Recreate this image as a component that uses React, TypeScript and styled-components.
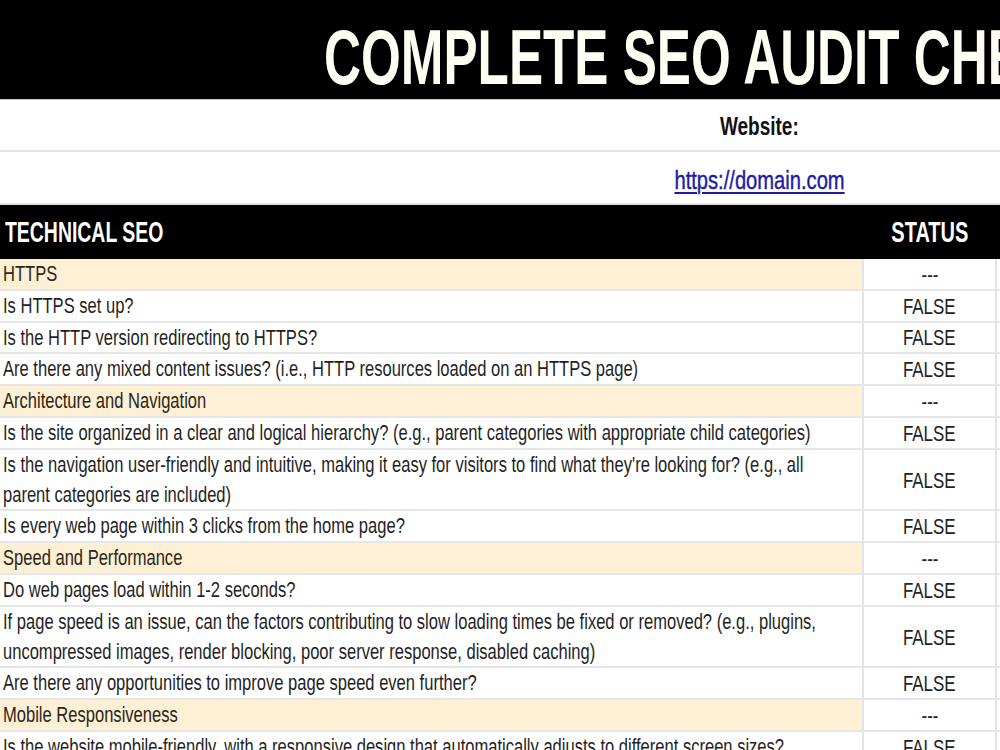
import styled, {createGlobalStyle} from "styled-components";

const GlobalStyle = createGlobalStyle`
  html, body {
    margin: 0;
    padding: 0;
    background: #fff;
    overflow: hidden;
  }
  body {
    font-family: "Liberation Sans", Arial, sans-serif;
    color: #1f1f1f;
  }
`;

type Item = { text: string, section?: boolean };

const items: Item[] = [
  {text: "HTTPS", section: true},
  {text: "Is HTTPS set up?"},
  {text: "Is the HTTP version redirecting to HTTPS?"},
  {text: "Are there any mixed content issues? (i.e., HTTP resources loaded on an HTTPS page)"},
  {text: "Architecture and Navigation", section: true},
  {text: "Is the site organized in a clear and logical hierarchy? (e.g., parent categories with appropriate child categories)"},
  {text: "Is the navigation user-friendly and intuitive, making it easy for visitors to find what they're looking for? (e.g., all parent categories are included)"},
  {text: "Is every web page within 3 clicks from the home page?"},
  {text: "Speed and Performance", section: true},
  {text: "Do web pages load within 1-2 seconds?"},
  {text: "If page speed is an issue, can the factors contributing to slow loading times be fixed or removed? (e.g., plugins, uncompressed images, render blocking, poor server response, disabled caching)"},
  {text: "Are there any opportunities to improve page speed even further?"},
  {text: "Mobile Responsiveness", section: true},
  {text: "Is the website mobile-friendly, with a responsive design that automatically adjusts to different screen sizes?"},
];

// the sheet uses a narrow face; squeeze Liberation Sans horizontally to match
const Narrow = styled.span<{ $scale: number, $origin?: string, $width?: number }>`
  display: inline-block;
  transform: scaleX(${p => p.$scale});
  transform-origin: ${p => p.$origin ?? "left"} center;
  ${p => p.$width ? `width: ${p.$width}px;` : "white-space: nowrap;"}
`;

const Sheet = styled.div`
  width: 1000px;
  height: 750px;
  overflow: hidden;
`;

const TitleBar = styled.div`
  height: 100px;
  background: #000;
  display: flex;
  align-items: center;
  padding: 15px 0 0 324px;
  white-space: nowrap;
  border-bottom: 1px solid #c9c9c9;
  box-sizing: border-box;
  overflow: hidden;
`;

const Title = styled.h1`
  margin: 0;
  color: #fffdf4;
  font-size: 77px;
  font-weight: 700;
  line-height: 1;
`;

const InfoRow = styled.div<{ $h: number }>`
  height: ${p => p.$h}px;
  display: grid;
  grid-template-columns: 862px 138px;
  border-bottom: 2px solid #e4e4e4;
  box-sizing: border-box;
`;

const InfoCell = styled.div<{ $right: number, $top: number }>`
  display: flex;
  align-items: center;
  justify-content: flex-end;
  padding-right: ${p => p.$right}px;
  padding-top: ${p => p.$top}px;
`;

const Label = styled.span`
  font-size: 25px;
  font-weight: 700;
  color: #111;
`;

const Link = styled.a`
  font-size: 26px;
  color: #1c1ca6;
  text-decoration: underline;
  text-decoration-thickness: 2px;
  text-underline-offset: 3px;
  -webkit-text-stroke: 0.4px #1c1ca6;
`;

const Table = styled.div`
  display: grid;
  grid-template-columns: 862px 135px 1fr;
`;

const HeadCell = styled.div<{ $center?: boolean }>`
  height: 54px;
  background: #000;
  color: #fff;
  font-size: 29px;
  font-weight: 700;
  display: flex;
  align-items: center;
  justify-content: ${p => p.$center ? "center" : "flex-start"};
  padding-left: ${p => p.$center ? 0 : 5}px;
  box-sizing: border-box;
  overflow: hidden;
`;

const TaskCell = styled.div<{ $section?: boolean }>`
  min-width: 0;
  overflow: hidden;
  box-sizing: border-box;
  padding: 0 0 0 3px;
  font-size: 22px;
  line-height: 29.8px;
  background: ${p => p.$section ? "#fdf0d4" : "#fff"};
  color: ${p => p.$section ? "#2b2619" : "#1f1f1f"};
  border-bottom: 2px solid #e6e6e6;
`;

const StatusCell = styled.div`
  box-sizing: border-box;
  font-size: 22px;
  color: #222;
  padding-top: 2px;
  border-left: 2px solid #e4e4e4;
  border-right: 2px solid #e4e4e4;
  border-bottom: 2px solid #e6e6e6;
  display: flex;
  align-items: center;
  justify-content: center;
  overflow: hidden;
`;

const Filler = styled.div`
  border-bottom: 2px solid #e6e6e6;
`;

const App = () => {
  return (
    <>
      <GlobalStyle/>
      <Sheet>
        <TitleBar>
          <Title><Narrow $scale={0.665}>COMPLETE SEO AUDIT CHECKLIST</Narrow></Title>
        </TitleBar>
        <InfoRow $h={52}>
          <InfoCell $right={63} $top={2}>
            <Narrow $scale={0.76} $origin="right"><Label>Website:</Label></Narrow>
          </InfoCell>
          <div/>
        </InfoRow>
        <InfoRow $h={53}>
          <InfoCell $right={17} $top={5}>
            <Narrow $scale={0.775} $origin="right"><Link href="#">https://domain.com</Link></Narrow>
          </InfoCell>
          <div/>
        </InfoRow>
        <Table>
          <HeadCell><Narrow $scale={0.67}>TECHNICAL SEO</Narrow></HeadCell>
          <HeadCell $center><Narrow $scale={0.69} $origin="center">STATUS</Narrow></HeadCell>
          <HeadCell/>
          {items.map(item => (
            <Row key={item.text} item={item}/>
          ))}
        </Table>
      </Sheet>
    </>
  );
};

const Row = ({item}: { item: Item }) => (
  <>
    <TaskCell $section={item.section}>
      <Narrow $scale={0.752} $width={1105}>{item.text}</Narrow>
    </TaskCell>
    <StatusCell>
      <Narrow $scale={0.77} $origin="center">{item.section ? "---" : "FALSE"}</Narrow>
    </StatusCell>
    <Filler/>
  </>
);

export default App;
